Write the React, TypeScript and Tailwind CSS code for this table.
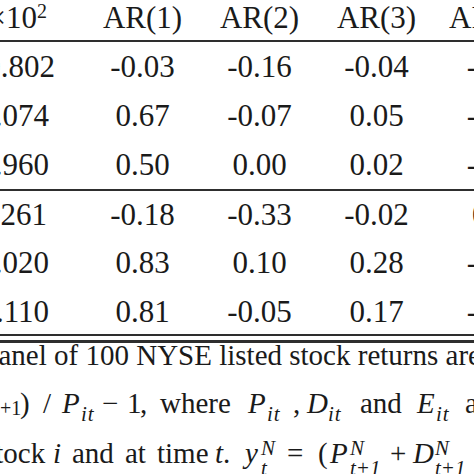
import React from 'react';

// rows of the table, first column is cut at the left edge of the crop
const upper = [
  { c1: '0.802', pr: 'pr-[29px]', v: ['-0.03', '-0.16', '-0.04', '-0.05'] },
  { c1: '1.074', pr: 'pr-[35px]', v: ['0.67', '-0.07', '0.05', '-0.08'] },
  { c1: '0.960', pr: 'pr-[35px]', v: ['0.50', '0.00', '0.02', '-0.01'] },
];

const lower = [
  { c1: '1.261', pr: 'pr-[37px]', v: ['-0.18', '-0.33', '-0.02', '0.01'], h: 'h-[47px] leading-[47px]' },
  { c1: '1.020', pr: 'pr-[35px]', v: ['0.83', '0.10', '0.28', '-0.04'], h: 'h-[49px] leading-[49px]' },
  { c1: '1.110', pr: 'pr-[35px]', v: ['0.81', '-0.05', '0.17', '-0.03'], h: 'h-[47px] leading-[49px]' },
];

const cols = 'grid grid-cols-[140px_117px_117px_117px_128px]';

function Row({ c1, pr, v, h }: { c1: string; pr: string; v: string[]; h: string }) {
  return (
    <div className={`${cols} ${h} text-[31px] whitespace-nowrap`}>
      <div className={`text-right ${pr}`}>{c1}</div>
      {v.map((x, i) => (
        <div key={i} className="text-center">
          {x}
        </div>
      ))}
    </div>
  );
}

// one token of the caption, boxed so the spacing follows the typeset original
function T({ w, children }: { w: string; children: React.ReactNode }) {
  return <span className={`inline-block ${w}`}>{children}</span>;
}

function Sub({ children }: { children: React.ReactNode }) {
  return <span className="text-[21px] italic tracking-[1px] align-[-8px] leading-none">{children}</span>;
}

function SupSub({ sup, sub }: { sup: React.ReactNode; sub: React.ReactNode }) {
  return (
    <span className="inline-flex flex-col align-[8px] text-[21px] leading-[20px] italic">
      <span>{sup}</span>
      <span>{sub}</span>
    </span>
  );
}

export default function App() {
  return (
    <div className="w-[474px] h-[474px] overflow-hidden bg-white text-[#1a1a1a] font-['Liberation_Serif',serif]">
      <div className="ml-[-56px] w-[700px]">
        <div className={`${cols} h-[40px] leading-[35px] text-[31px] whitespace-nowrap`}>
          <div className="text-right pr-[37px]">
            ×10<span className="text-[20px] align-[10px] leading-none">2</span>
          </div>
          <div className="text-center">AR(1)</div>
          <div className="text-center">AR(2)</div>
          <div className="text-center">AR(3)</div>
          <div className="text-left pl-[14px]">AR(12)</div>
        </div>
        <div className="h-[2px] bg-[#2e2e2e]" />
        {upper.map((r, i) => (
          <Row key={i} {...r} h="h-[49px] leading-[49px]" />
        ))}
        <div className="h-[2px] bg-[#2e2e2e]" />
        {lower.map((r, i) => (
          <Row key={i} {...r} />
        ))}
        <div className="h-[2px] bg-[#2e2e2e]" />
        <div className="h-[3px] mt-[4px] bg-[#2e2e2e]" />
      </div>

      <div className="text-[29px] leading-[24px] whitespace-nowrap">
        <div className="h-[48px] ml-[-16px]">panel of 100 NYSE listed stock returns are</div>
        <div className="h-[47px]">
          <T w="w-[20px]">
            <span className="text-[20px] align-[-2px]">+1</span>
          </T>
          <T w="w-[23px]">)</T>
          <T w="w-[19px]">/</T>
          <T w="w-[19px]">
            <i>P</i>
          </T>
          <T w="w-[21px]">
            <Sub>it</Sub>
          </T>
          <T w="w-[25px]">−</T>
          <T w="w-[13px]">1</T>
          <T w="w-[20px]">,</T>
          <T w="w-[88px]">where</T>
          <T w="w-[19px]">
            <i>P</i>
          </T>
          <T w="w-[26px]">
            <Sub>it</Sub>
          </T>
          <T w="w-[14px]">,</T>
          <T w="w-[21px]">
            <i>D</i>
          </T>
          <T w="w-[32px]">
            <Sub>it</Sub>
          </T>
          <T w="w-[57px]">and</T>
          <T w="w-[19px]">
            <i>E</i>
          </T>
          <T w="w-[29px]">
            <Sub>it</Sub>
          </T>
          <T w="w-[40px]">are</T>
        </div>
        <div className="h-[47px] ml-[-16px]">
          <T w="w-[69px]">stock</T>
          <T w="w-[19px]">
            <i>i</i>
          </T>
          <T w="w-[53px]">and</T>
          <T w="w-[32px]">at</T>
          <T w="w-[58px]">time</T>
          <T w="w-[30px]">
            <i>t</i>.
          </T>
          <T w="w-[16px]">
            <i>y</i>
          </T>
          <T w="w-[26px]">
            <SupSub sup="N" sub="t" />
          </T>
          <T w="w-[31px]">=</T>
          <T w="w-[12px]">(</T>
          <T w="w-[20px]">
            <i>P</i>
          </T>
          <T w="w-[40px]">
            <SupSub sup="N" sub={<>t+1</>} />
          </T>
          <T w="w-[23px]">+</T>
          <T w="w-[22px]">
            <i>D</i>
          </T>
          <T w="w-[45px]">
            <SupSub sup="N" sub={<>t+1</>} />
          </T>
        </div>
      </div>
    </div>
  );
}
